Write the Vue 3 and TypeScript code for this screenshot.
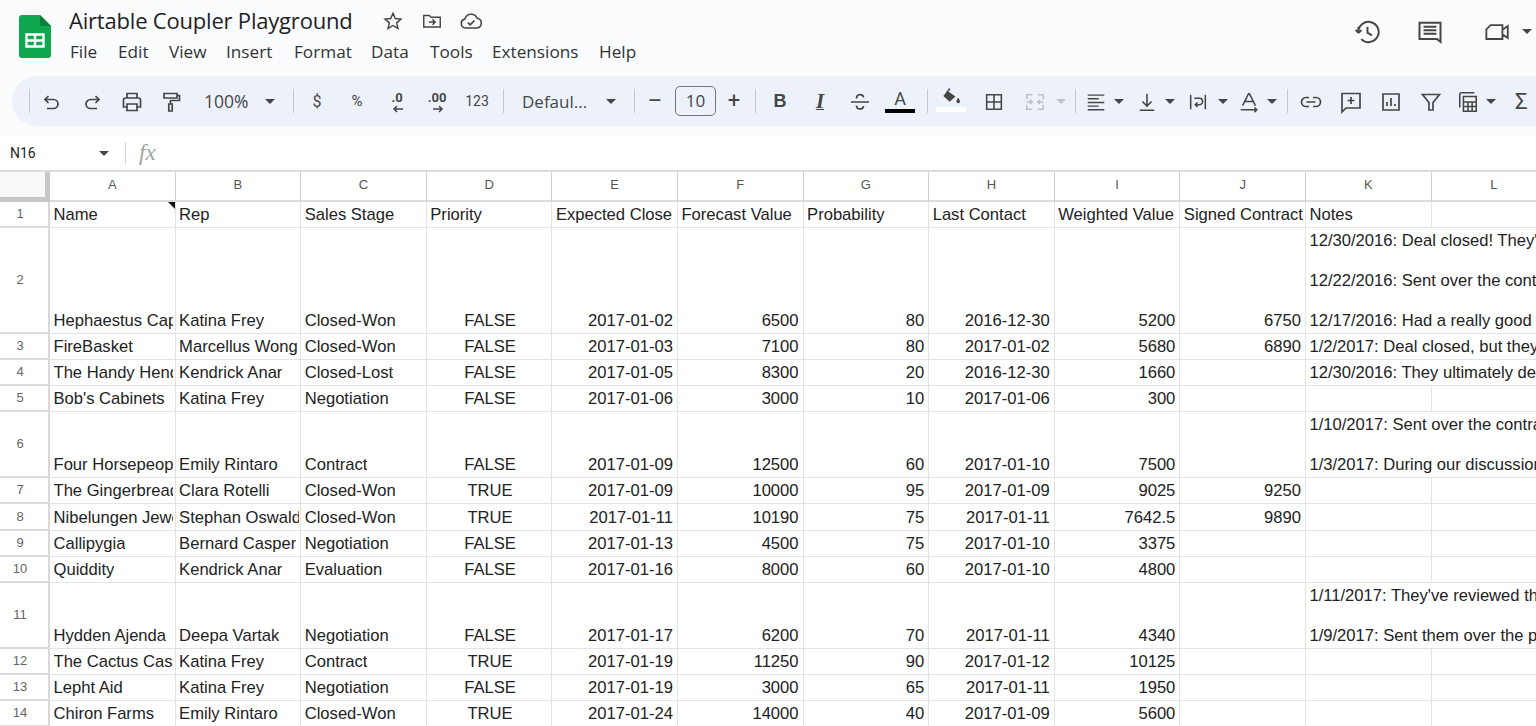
<script setup lang="ts">
type Row = { h: number; c: string[]; note?: string[] }
const colLetters = 'ABCDEFGHIJKL'.split('')
const rows: Row[] = [
  { h: 26.1, c: ['Name', 'Rep', 'Sales Stage', 'Priority', 'Expected Close', 'Forecast Value', 'Probability', 'Last Contact', 'Weighted Value', 'Signed Contract', 'Notes', ''] },
  { h: 106, c: ['Hephaestus Capital', 'Katina Frey', 'Closed-Won', 'FALSE', '2017-01-02', '6500', '80', '2016-12-30', '5200', '6750'], note: ["12/30/2016: Deal closed! They've", '', '12/22/2016: Sent over the contract', '', '12/17/2016: Had a really good call'] },
  { h: 26.1, c: ['FireBasket', 'Marcellus Wong', 'Closed-Won', 'FALSE', '2017-01-03', '7100', '80', '2017-01-02', '5680', '6890'], note: ['1/2/2017: Deal closed, but they asked'] },
  { h: 26.1, c: ['The Handy Hender', 'Kendrick Anar', 'Closed-Lost', 'FALSE', '2017-01-05', '8300', '20', '2016-12-30', '1660', ''], note: ['12/30/2016: They ultimately decided'] },
  { h: 26.1, c: ["Bob's Cabinets", 'Katina Frey', 'Negotiation', 'FALSE', '2017-01-06', '3000', '10', '2017-01-06', '300', '', '', ''] },
  { h: 66, c: ['Four Horsepeople', 'Emily Rintaro', 'Contract', 'FALSE', '2017-01-09', '12500', '60', '2017-01-10', '7500', ''], note: ['1/10/2017: Sent over the contract', '', '1/3/2017: During our discussion'] },
  { h: 26.1, c: ['The Gingerbread Man', 'Clara Rotelli', 'Closed-Won', 'TRUE', '2017-01-09', '10000', '95', '2017-01-09', '9025', '9250', '', ''] },
  { h: 26.1, c: ['Nibelungen Jewelers', 'Stephan Oswald', 'Closed-Won', 'TRUE', '2017-01-11', '10190', '75', '2017-01-11', '7642.5', '9890', '', ''] },
  { h: 26.1, c: ['Callipygia', 'Bernard Casper', 'Negotiation', 'FALSE', '2017-01-13', '4500', '75', '2017-01-10', '3375', '', '', ''] },
  { h: 26.1, c: ['Quiddity', 'Kendrick Anar', 'Evaluation', 'FALSE', '2017-01-16', '8000', '60', '2017-01-10', '4800', '', '', ''] },
  { h: 66, c: ['Hydden Ajenda', 'Deepa Vartak', 'Negotiation', 'FALSE', '2017-01-17', '6200', '70', '2017-01-11', '4340', ''], note: ["1/11/2017: They've reviewed the", '', '1/9/2017: Sent them over the proposal'] },
  { h: 26.1, c: ['The Cactus Castle', 'Katina Frey', 'Contract', 'TRUE', '2017-01-19', '11250', '90', '2017-01-12', '10125', '', '', ''] },
  { h: 26.1, c: ['Lepht Aid', 'Katina Frey', 'Negotiation', 'FALSE', '2017-01-19', '3000', '65', '2017-01-11', '1950', '', '', ''] },
  { h: 26.1, c: ['Chiron Farms', 'Emily Rintaro', 'Closed-Won', 'TRUE', '2017-01-24', '14000', '40', '2017-01-09', '5600', '', '', ''] },
]
const gridRows = '30px ' + rows.map((r) => r.h + 'px').join(' ')
function align(ri: number, ci: number): string {
  if (ri === 0) return ''
  if (ci === 3) return 'center'
  if (ci >= 4 && ci <= 9) return 'right'
  return ''
}
const menus = ['File', 'Edit', 'View', 'Insert', 'Format', 'Data', 'Tools', 'Extensions', 'Help']
</script>

<template>
  <div class="page">
    <header class="top">
      <svg class="logo" viewBox="0 0 32 43" width="32" height="43">
        <path d="M3 0H21L32 11V40a3 3 0 0 1-3 3H3a3 3 0 0 1-3-3V3a3 3 0 0 1 3-3Z" fill="#0fa84f" />
        <path d="M21 0L32 11H23a2 2 0 0 1-2-2Z" fill="#0a7f3b" />
        <path class="lt" fill="none" d="M7.5 19.5h17v12h-17ZM7.5 25.5h17M16 19.5v12" />
      </svg>
      <div class="titles">
        <div class="title-row">
          <span class="doc-title">Airtable Coupler Playground</span>
          <svg class="ti star" viewBox="0 0 24 24" width="22" height="22"><path d="M12 3.6l2.5 5.7 6.2.6-4.7 4.1 1.4 6.1L12 16.9 6.6 20.1 8 14 3.3 9.9l6.2-.6Z" /></svg>
          <svg class="ti move" viewBox="0 0 24 24" width="22" height="22"><path d="M3 18.5V6h6l2 2h10v10.500ZM8.500 13h7M12.500 10l3 3-3 3" /></svg>
          <svg class="ti cloud" viewBox="0 0 24 24" width="26" height="24"><path d="M6.500 19a4.500 4.500 0 0 1-.6-8.900A6.500 6.500 0 0 1 18.200 9.300 4.900 4.900 0 0 1 18 19ZM8.800 13.600l2.300 2.300 4.300-4.300" /></svg>
        </div>
        <nav class="menus"><span v-for="m in menus" :key="m">{{ m }}</span></nav>
      </div>
      <div class="actions">
        <svg class="ai hist" viewBox="0 0 24 24" width="28" height="28"><path d="M4.600 12a8.700 8.700 0 1 1 2.500 6.100M4.600 12.800V7.600M4.600 12.800L2.300 10.200M4.600 12.800l2.700-2.400M12.400 7.500v5l3.800 2.400" /></svg>
        <svg class="ai" viewBox="0 0 24 24" width="28" height="28"><path d="M3 4h18v16.500l-3-2.500H3ZM6.500 7.500h11M6.500 10.500h11M6.500 13.500h11" /></svg>
        <span class="cam">
          <svg class="ai" viewBox="0 0 28 24" width="30" height="26"><path d="M9 5.500h11v13H5V9.500ZM20 10l5-3.500v11L20 14" /></svg>
          <i class="caret dark"></i>
        </span>
      </div>
    </header>

    <div class="toolbar">
      <i class="sep s0"></i>
      <svg class="ic w40" viewBox="0 0 24 24"><path d="M8.500 6L5 9.500 8.500 13M5 9.500h8.500a4.500 4.500 0 0 1 0 9H7" /></svg>
      <svg class="ic w40" viewBox="0 0 24 24"><path d="M15.500 6L19 9.500 15.500 13M19 9.500h-8.500a4.500 4.500 0 0 0 0 9H17" /></svg>
      <svg class="ic w40" viewBox="0 0 24 24"><path d="M7 8V3.500h10V8M7 17H3.500V10a2 2 0 0 1 2-2h13a2 2 0 0 1 2 2v7H17M7 14h10v6.500H7Z" /></svg>
      <svg class="ic w40 roller" viewBox="0 0 24 24"><path d="M5 3.500h13v4.500H5ZM18 5.500h2.500v5H11.500V14M9.800 14h3.400v7H9.800Z" /></svg>
      <span class="tx zoom">100%</span><i class="caret c1"></i>
      <i class="sep s1"></i>
      <span class="tx fmt">$</span>
      <span class="tx fmt pct">%</span>
      <span class="tx fmt dec">.0<svg viewBox="0 0 12 8" width="12" height="8"><path d="M11 4H2M5 1L2 4l3 3" /></svg></span>
      <span class="tx fmt dec">.00<svg viewBox="0 0 12 8" width="12" height="8"><path d="M1 4h9M7 1l3 3-3 3" /></svg></span>
      <span class="tx fmt num">123</span>
      <i class="sep s2"></i>
      <span class="tx font">Defaul...</span><i class="caret c2"></i>
      <i class="sep s3"></i>
      <span class="tx pm minus">–</span>
      <span class="size">10</span>
      <span class="tx pm">+</span>
      <i class="sep s4"></i>
      <span class="tx sty b">B</span>
      <span class="tx sty it">I</span>
      <svg class="ic w40" viewBox="0 0 24 24"><path d="M3 12h18M8.500 8.500c0-5 7-5 7-1M8.500 15.500c0 4.500 7 4.500 7 .5" /></svg>
      <span class="txtcolor"><span>A</span><i></i></span>
      <i class="sep s5"></i>
      <span class="fill">
        <svg viewBox="0 0 24 20" width="22" height="18"><path class="solid" d="M10 1l1.500 1.500L9 5l8 5.500-6.500 6-7-6.500ZM20 12c1.500 2 2 3 2 4a2 2 0 0 1-4 0c0-1 .5-2 2-4Z" /></svg>
        <i></i>
      </span>
      <svg class="ic borders" viewBox="0 0 24 24"><path d="M4 4h16v16H4ZM4 12h16M12 4v16" /></svg>
      <svg class="ic merge" viewBox="0 0 24 24"><path d="M3 9V4h6M3 15v5h6M21 9V4h-6M21 15v5h-6M3 12h6M6.500 9.500L9 12l-2.500 2.500M21 12h-6M17.500 9.500L15 12l2.500 2.500" /></svg>
      <i class="caret c3"></i>
      <i class="sep s6"></i>
      <svg class="ic al" viewBox="0 0 24 24"><path d="M3 4.500h18M3 8.500h12M3 12.500h18M3 16.500h12M3 20.500h18" /></svg><i class="caret c4"></i>
      <svg class="ic va" viewBox="0 0 24 24"><path d="M12 3v13M7 11.500l5 5 5-5M4 21h16" /></svg><i class="caret c4"></i>
      <svg class="ic wr" viewBox="0 0 24 24"><path d="M4 4v16M20 4v16M8 8h5.500a3.500 3.500 0 0 1 0 7H9M11.500 12.500L9 15l2.500 2.500" /></svg><i class="caret c5"></i>
      <svg class="ic ro" viewBox="0 0 24 24"><path d="M5 16L11.500 3h1L19 16M7.500 11.500h9M3 20.500h17M18 18l2.500 2.500L18 23" /></svg><i class="caret c6"></i>
      <i class="sep s7"></i>
      <svg class="ic w40 first" viewBox="0 0 24 24"><path d="M10 7.500H7a4.500 4.500 0 0 0 0 9h3M14 7.500h3a4.500 4.500 0 0 1 0 9h-3M7.500 12h9" /></svg>
      <svg class="ic w40" viewBox="0 0 24 24"><path d="M3 3.500h18V18H7l-4 4ZM12 7v7M8.500 10.500h7" /></svg>
      <svg class="ic w40" viewBox="0 0 24 24"><path d="M4 4h16v16H4ZM8 16v-4M12 16V8M16 16v-2" /></svg>
      <svg class="ic w40" viewBox="0 0 24 24"><path d="M3.500 4.500h17l-6.500 8V20h-4v-7.500Z" /></svg>
      <svg class="ic fn" viewBox="0 0 24 24"><path d="M3 18V4a2 2 0 0 1 2-2h14M7 6h14v16H7ZM7 12h14M7 17h14M12 12v10M16.500 12v10" /></svg><i class="caret c7"></i>
      <span class="tx sigma">Σ</span>
    </div>

    <div class="fbar">
      <span class="ref">N16</span><i class="caret c8"></i><i class="fsep"></i><span class="fx">fx</span>
    </div>

    <div class="grid" :style="{ gridTemplateRows: gridRows }">
      <div class="corner"></div>
      <div v-for="l in colLetters" :key="l" class="colh">{{ l }}</div>
      <template v-for="(r, ri) in rows" :key="ri">
        <div class="rowh">{{ ri + 1 }}</div>
        <div v-for="(t, ci) in r.c" :key="ci" class="cell" :class="[align(ri, ci), { tri: ri === 0 && ci === 0 }]"><span>{{ t }}</span></div>
        <div v-if="r.note" class="cell note"><span><template v-for="(n, ni) in r.note" :key="ni">{{ n }}<br /></template></span></div>
      </template>
    </div>
  </div>
</template>

<style>
html, body { margin: 0; overflow: hidden; }
</style>

<style scoped>
.page { width: 1536px; height: 726px; overflow: hidden; background: #f9fbfd; font-family: Roboto, "Liberation Sans", sans-serif; color: #444746; }
i { display: block; flex: none; }
svg { display: block; flex: none; fill: none; stroke: #444746; stroke-width: 1.8; }
.top { height: 76px; display: flex; box-sizing: border-box; padding: 15px 0 0 19px; }
.logo path { stroke: none; }
.logo .lt { stroke: #fff; stroke-width: 2.4; }
.titles { margin-left: 18px; margin-top: -10px; }
.title-row { display: flex; align-items: center; height: 30px; }
.doc-title { font-family: "Open Sans", sans-serif; font-size: 22px; color: #1f1f1f; width: 313px; white-space: nowrap; letter-spacing: -0.2px; }
.ti { stroke-width: 1.6; margin-right: 17px; margin-top: 2px; }
.ti.star { margin-right: 17px; }
.ti.move { margin-right: 15px; }
.menus { display: flex; margin-top: 5px; font-family: "Open Sans", sans-serif; font-size: 17.200px; color: #333; margin-left: 1px; }
.menus span:nth-child(1) { width: 48px; }
.menus span:nth-child(2) { width: 51px; }
.menus span:nth-child(3) { width: 57px; }
.menus span:nth-child(4) { width: 68px; }
.menus span:nth-child(5) { width: 77px; }
.menus span:nth-child(6) { width: 59px; }
.menus span:nth-child(7) { width: 62px; }
.menus span:nth-child(8) { width: 107px; }
.actions { margin-left: auto; display: flex; align-items: center; height: 33px; padding-right: 4px; }
.ai { stroke-width: 1.7; }
.hist { margin-right: 35px; }
.cam { display: flex; align-items: center; margin-left: 37px; }
.caret { width: 0; height: 0; border: 5px solid transparent; border-top-color: #444746; border-bottom: 0; }
.caret.dark { margin-left: 11px; }

.toolbar { margin-left: 12px; height: 50px; background: #edf2fa; border-radius: 25px 0 0 25px; display: flex; align-items: center; overflow: hidden; width: 1540px; }
.sep { width: 1px; height: 24px; background: #c7c7c7; }
.s0 { margin: 0 0 0 17px; }
.tx { white-space: nowrap; font-size: 16px; color: #444746; }
.ic { width: 22px; height: 22px; stroke-width: 1.7; margin-top: 2px; }
.w40 { width: 24px; height: 24px; padding: 0 8px; flex: none; }
.toolbar > .ic:nth-child(2) { margin-left: 2px; }
.roller { margin-left: -1px; margin-right: 1px; }
.zoom { margin-left: 12px; width: 61px; font-size: 17.500px; font-family: "Open Sans", sans-serif; }
.c1 { margin-right: 18px; }
.s1 { margin-right: 3px; }
.fmt { width: 40px; text-align: center; font-size: 16px; display: flex; justify-content: center; position: relative; }
.fmt.pct { font-size: 15px; }
.dec { font-weight: 700; font-size: 13px; height: 24px; line-height: 18px; }
.dec svg { position: absolute; left: 15px; top: 16px; stroke-width: 1.5; }
.fmt.num { font-size: 14px; margin-right: 6px; }
.s2 { margin-right: 18px; }
.font { width: 84px; font-size: 17px; font-family: "Open Sans", sans-serif; }
.c2 { margin-right: 18px; }
.s3 { margin-right: 12px; }
.pm { font-size: 22px; width: 16px; text-align: center; line-height: 24px; }
.minus { margin-right: 12px; }
.size { box-sizing: border-box; width: 41px; height: 30px; border: 1.500px solid #747775; border-radius: 5px; text-align: center; line-height: 27px; font-size: 17px; margin-right: 10px; font-family: "Open Sans", sans-serif; }
.s4 { margin-left: 13px; margin-right: 5px; }
.sty { width: 40px; text-align: center; font-size: 18px; font-family: "Liberation Sans", sans-serif; }
.b { font-weight: 700; margin-left: -1px; }
.it { font-style: italic; font-weight: 700; font-family: "Liberation Serif", serif; font-size: 21px; text-decoration: underline; text-decoration-thickness: 1px; text-underline-offset: 1px; }
.txtcolor { width: 30px; margin: 0 5px; display: flex; flex-direction: column; align-items: center; }
.txtcolor span { font-size: 18px; line-height: 20px; width: 30px; text-align: center; }
.txtcolor i { width: 30px; height: 4px; background: #000; }
.s5 { margin-left: 7px; margin-right: 8px; }
.fill { width: 30px; display: flex; flex-direction: column; align-items: center; }
.fill svg { margin-top: -4px; }
.fill i { width: 30px; height: 5px; background: #fff; margin-top: 2px; }
.solid { fill: #444746; stroke: none; }
.borders { margin-left: 17px; }
.merge { margin-left: 19px; stroke: #bdc1c6; }
.c3 { border-top-color: #bdc1c6; margin-left: 10px; }
.s6 { margin-left: 9px; margin-right: 9px; }
.al { stroke-width: 1.5; }
.c4 { margin-left: 7px; margin-right: 12px; }
.c5 { margin-left: 9px; margin-right: 10px; }
.c6 { margin-left: 7px; }
.s7 { margin-left: 10px; }
.first { margin-left: 3px; }
.fn { margin-left: 6px; }
.c7 { margin-left: 7px; }
.sigma { margin-left: 19px; font-size: 22px; }

.fbar { height: 34px; margin-top: 10px; background: #fff; display: flex; align-items: center; }
.ref { margin-left: 10px; width: 89px; font-size: 14px; color: #1f1f1f; }
.c8 { margin-right: 16px; }
.fsep { width: 1px; height: 22px; background: #d4d6d8; }
.fx { margin-left: 13px; font-family: "Liberation Serif", serif; font-style: italic; font-size: 23px; color: #a0a3a5; }

.grid { display: grid; grid-template-columns: 50px repeat(12, 125.6px); width: 1560px; background: #fff; border-top: 2px solid #dcdcdc; box-sizing: border-box; font-family: "Liberation Sans", Arial, sans-serif; }
.corner { background: #f8f9f9; border-right: 5px solid #c8c8c8; border-bottom: 5px solid #c8c8c8; box-sizing: border-box; }
.colh { display: flex; align-items: center; justify-content: center; font-size: 13px; color: #555; border-right: 1px solid #cfcfcf; border-bottom: 2px solid #dcdcdc; box-sizing: border-box; padding-bottom: 3px; }
.rowh { display: flex; align-items: center; justify-content: center; font-size: 13px; color: #666; border-right: 2px solid #d8d8d8; border-bottom: 2px solid #dcdcdc; box-sizing: border-box; padding-right: 8px; padding-bottom: 1px; }
.cell { position: relative; overflow: hidden; white-space: nowrap; display: flex; align-items: flex-end; box-sizing: border-box; padding: 0 1.500px 2px 3.500px; border-right: 1px solid #e2e3e3; border-bottom: 1px solid #e2e3e3; font-size: 16.600px; line-height: 20px; color: #222; min-width: 0; }
.cell span { min-width: 0; overflow: hidden; }
.cell.right { justify-content: flex-end; padding-right: 4px; }
.cell.center { justify-content: center; }
.tri::after { content: ""; position: absolute; right: 0; top: 0; border-left: 7px solid transparent; border-top: 7px solid #111; }
.note { grid-column: span 2; }
</style>
